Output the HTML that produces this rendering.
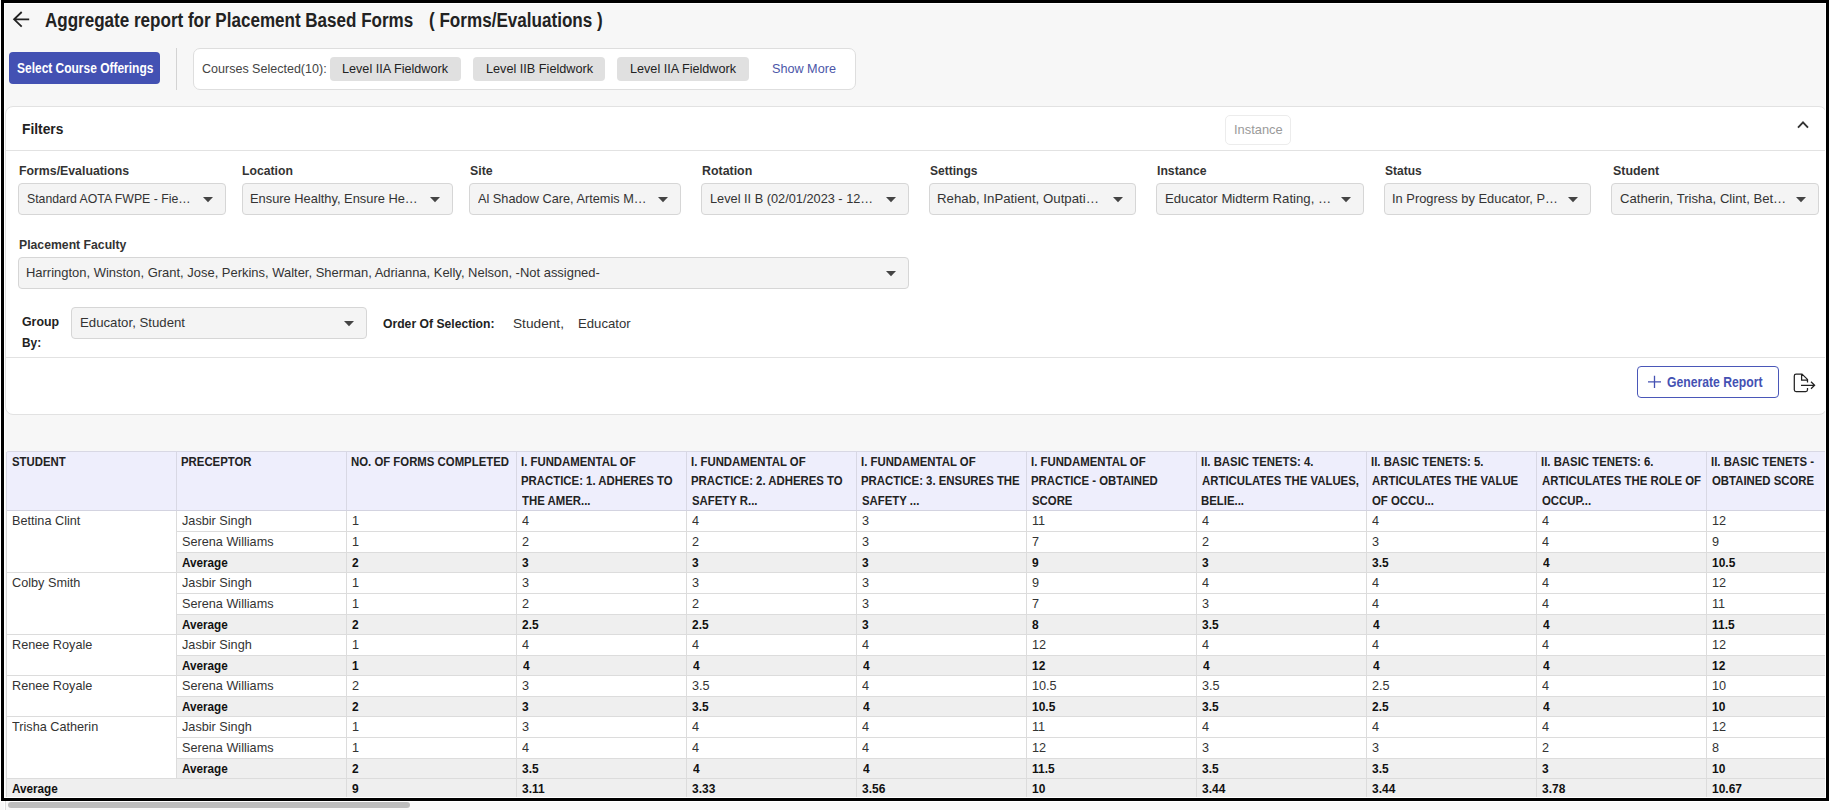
<!DOCTYPE html>
<html><head><meta charset="utf-8"><title>Aggregate report for Placement Based Forms</title>
<style>
html,body{margin:0;padding:0;width:1830px;height:810px;overflow:hidden;background:#f7f7f7;font-family:"Liberation Sans",sans-serif}
.t{position:absolute;white-space:nowrap;transform-origin:0 0}
</style></head><body>
<svg style="position:absolute;left:0;top:0" width="40" height="40"><path d="M14 19.3H29.2M21.7 12L14.1 19.3L21.7 26.6" fill="none" stroke="#222" stroke-width="1.8"/></svg>
<div style="position:absolute;left:9px;top:52px;width:151px;height:32px;background:#4351b3;border-radius:4px"></div>
<div style="position:absolute;left:176px;top:48px;width:1px;height:42px;background:#d3d3d3"></div>
<div style="position:absolute;left:193px;top:48px;width:661px;height:40px;background:#fff;border:1px solid #dedede;border-radius:7px"></div>
<div style="position:absolute;left:330px;top:57px;width:131px;height:24px;background:#e0e0e0;border-radius:4px"></div>
<div style="position:absolute;left:473px;top:57px;width:132px;height:24px;background:#e0e0e0;border-radius:4px"></div>
<div style="position:absolute;left:617px;top:57px;width:132px;height:24px;background:#e0e0e0;border-radius:4px"></div>
<div style="position:absolute;left:5px;top:106px;width:1822px;height:309px;box-sizing:border-box;background:#fff;border:1px solid #e2e2e2;border-radius:8px"></div>
<div style="position:absolute;left:6px;top:150px;width:1830px;height:1px;background:#e2e2e2"></div>
<div style="position:absolute;left:1225px;top:115px;width:64px;height:28px;border:1px solid #ececec;border-radius:5px"></div>
<svg style="position:absolute;left:1790px;top:115px" width="30" height="20"><path d="M8 12.6L13 7.4L18 12.6" fill="none" stroke="#333" stroke-width="1.9"/></svg>
<div style="position:absolute;left:18px;top:183px;width:208px;height:32px;box-sizing:border-box;background:#f4f4f4;border:1px solid #d6d6d6;border-radius:4px"></div>
<svg style="position:absolute;left:203.2px;top:196.6px" width="10" height="6"><path d="M0 0H10L5 5.3Z" fill="#444"/></svg>
<div style="position:absolute;left:242px;top:183px;width:211px;height:32px;box-sizing:border-box;background:#f4f4f4;border:1px solid #d6d6d6;border-radius:4px"></div>
<svg style="position:absolute;left:429.9px;top:196.6px" width="10" height="6"><path d="M0 0H10L5 5.3Z" fill="#444"/></svg>
<div style="position:absolute;left:469px;top:183px;width:212px;height:32px;box-sizing:border-box;background:#f4f4f4;border:1px solid #d6d6d6;border-radius:4px"></div>
<svg style="position:absolute;left:658.1px;top:196.6px" width="10" height="6"><path d="M0 0H10L5 5.3Z" fill="#444"/></svg>
<div style="position:absolute;left:701px;top:183px;width:208px;height:32px;box-sizing:border-box;background:#f4f4f4;border:1px solid #d6d6d6;border-radius:4px"></div>
<svg style="position:absolute;left:886.0px;top:196.6px" width="10" height="6"><path d="M0 0H10L5 5.3Z" fill="#444"/></svg>
<div style="position:absolute;left:929px;top:183px;width:207px;height:32px;box-sizing:border-box;background:#f4f4f4;border:1px solid #d6d6d6;border-radius:4px"></div>
<svg style="position:absolute;left:1112.8px;top:196.6px" width="10" height="6"><path d="M0 0H10L5 5.3Z" fill="#444"/></svg>
<div style="position:absolute;left:1156px;top:183px;width:208px;height:32px;box-sizing:border-box;background:#f4f4f4;border:1px solid #d6d6d6;border-radius:4px"></div>
<svg style="position:absolute;left:1341.0px;top:196.6px" width="10" height="6"><path d="M0 0H10L5 5.3Z" fill="#444"/></svg>
<div style="position:absolute;left:1384px;top:183px;width:207px;height:32px;box-sizing:border-box;background:#f4f4f4;border:1px solid #d6d6d6;border-radius:4px"></div>
<svg style="position:absolute;left:1567.8px;top:196.6px" width="10" height="6"><path d="M0 0H10L5 5.3Z" fill="#444"/></svg>
<div style="position:absolute;left:1611px;top:183px;width:208px;height:32px;box-sizing:border-box;background:#f4f4f4;border:1px solid #d6d6d6;border-radius:4px"></div>
<svg style="position:absolute;left:1796.0px;top:196.6px" width="10" height="6"><path d="M0 0H10L5 5.3Z" fill="#444"/></svg>
<div style="position:absolute;left:18px;top:257px;width:891px;height:32px;box-sizing:border-box;background:#f4f4f4;border:1px solid #d6d6d6;border-radius:4px"></div>
<svg style="position:absolute;left:886.0px;top:270.8px" width="10" height="6"><path d="M0 0H10L5 5.3Z" fill="#444"/></svg>
<div style="position:absolute;left:71px;top:307px;width:296px;height:32px;box-sizing:border-box;background:#f4f4f4;border:1px solid #d6d6d6;border-radius:4px"></div>
<svg style="position:absolute;left:344.2px;top:320.6px" width="10" height="6"><path d="M0 0H10L5 5.3Z" fill="#444"/></svg>
<div style="position:absolute;left:6px;top:357px;width:1830px;height:1px;background:#e2e2e2"></div>
<div style="position:absolute;left:1637.4px;top:366.1px;width:139.2px;height:29.5px;border:1px solid #4a57b8;border-radius:4px"></div>
<svg style="position:absolute;left:1640px;top:370px" width="30" height="24"><path d="M8 11.9H21M14.5 5.8V18" fill="none" stroke="#4451b3" stroke-width="1.3"/></svg>
<svg style="position:absolute;left:1790px;top:370px" width="30" height="26"><path d="M17.5 12.5V9.4L12 4.1H6.1Q4.3 4.1 4.3 5.9V19.8Q4.3 21.6 6.1 21.6H15.7Q17.5 21.6 17.5 19.8V18M11.6 4.3V10.1H17.5M11 15.3H24.5M21 11.8L24.6 15.3L21 18.8" fill="none" stroke="#222" stroke-width="1.25"/></svg>
<div style="position:absolute;left:6px;top:451px;width:1830px;height:60px;background:#eeeefc;border-top:1px solid #d8d8e4;border-radius:3px 0 0 0;box-sizing:border-box"></div>
<div style="position:absolute;left:6px;top:511px;width:1830px;height:300px;background:#fff"></div>
<div style="position:absolute;left:177px;top:552px;width:1699px;height:20px;background:#efefef"></div>
<div style="position:absolute;left:177px;top:614px;width:1699px;height:20px;background:#efefef"></div>
<div style="position:absolute;left:177px;top:655px;width:1699px;height:20px;background:#efefef"></div>
<div style="position:absolute;left:177px;top:696px;width:1699px;height:20px;background:#efefef"></div>
<div style="position:absolute;left:177px;top:758px;width:1699px;height:20px;background:#efefef"></div>
<div style="position:absolute;left:6px;top:778px;width:1870px;height:21px;background:#efefef"></div>
<div style="position:absolute;left:6px;top:510px;width:1830px;height:1px;background:#d3d3e0"></div>
<div style="position:absolute;left:176px;top:531px;width:1700px;height:1px;background:#dcdcdc"></div>
<div style="position:absolute;left:176px;top:552px;width:1700px;height:1px;background:#dcdcdc"></div>
<div style="position:absolute;left:6px;top:572px;width:1870px;height:1px;background:#dcdcdc"></div>
<div style="position:absolute;left:176px;top:593px;width:1700px;height:1px;background:#dcdcdc"></div>
<div style="position:absolute;left:176px;top:614px;width:1700px;height:1px;background:#dcdcdc"></div>
<div style="position:absolute;left:6px;top:634px;width:1870px;height:1px;background:#dcdcdc"></div>
<div style="position:absolute;left:176px;top:655px;width:1700px;height:1px;background:#dcdcdc"></div>
<div style="position:absolute;left:6px;top:675px;width:1870px;height:1px;background:#dcdcdc"></div>
<div style="position:absolute;left:176px;top:696px;width:1700px;height:1px;background:#dcdcdc"></div>
<div style="position:absolute;left:6px;top:716px;width:1870px;height:1px;background:#dcdcdc"></div>
<div style="position:absolute;left:176px;top:737px;width:1700px;height:1px;background:#dcdcdc"></div>
<div style="position:absolute;left:176px;top:758px;width:1700px;height:1px;background:#dcdcdc"></div>
<div style="position:absolute;left:6px;top:778px;width:1870px;height:1px;background:#dcdcdc"></div>
<div style="position:absolute;left:6px;top:799px;width:1870px;height:1px;background:#dcdcdc"></div>
<div style="position:absolute;left:6px;top:452px;width:1px;height:58px;background:#d8d8e4"></div>
<div style="position:absolute;left:6px;top:510px;width:1px;height:300px;background:#d9d9d9"></div>
<div style="position:absolute;left:176px;top:452px;width:1px;height:58px;background:#d8d8e4"></div>
<div style="position:absolute;left:176px;top:511px;width:1px;height:267px;background:#dcdcdc"></div>
<div style="position:absolute;left:346px;top:452px;width:1px;height:58px;background:#d8d8e4"></div>
<div style="position:absolute;left:346px;top:511px;width:1px;height:299px;background:#dcdcdc"></div>
<div style="position:absolute;left:516px;top:452px;width:1px;height:58px;background:#d8d8e4"></div>
<div style="position:absolute;left:516px;top:511px;width:1px;height:299px;background:#dcdcdc"></div>
<div style="position:absolute;left:686px;top:452px;width:1px;height:58px;background:#d8d8e4"></div>
<div style="position:absolute;left:686px;top:511px;width:1px;height:299px;background:#dcdcdc"></div>
<div style="position:absolute;left:856px;top:452px;width:1px;height:58px;background:#d8d8e4"></div>
<div style="position:absolute;left:856px;top:511px;width:1px;height:299px;background:#dcdcdc"></div>
<div style="position:absolute;left:1026px;top:452px;width:1px;height:58px;background:#d8d8e4"></div>
<div style="position:absolute;left:1026px;top:511px;width:1px;height:299px;background:#dcdcdc"></div>
<div style="position:absolute;left:1196px;top:452px;width:1px;height:58px;background:#d8d8e4"></div>
<div style="position:absolute;left:1196px;top:511px;width:1px;height:299px;background:#dcdcdc"></div>
<div style="position:absolute;left:1366px;top:452px;width:1px;height:58px;background:#d8d8e4"></div>
<div style="position:absolute;left:1366px;top:511px;width:1px;height:299px;background:#dcdcdc"></div>
<div style="position:absolute;left:1536px;top:452px;width:1px;height:58px;background:#d8d8e4"></div>
<div style="position:absolute;left:1536px;top:511px;width:1px;height:299px;background:#dcdcdc"></div>
<div style="position:absolute;left:1706px;top:452px;width:1px;height:58px;background:#d8d8e4"></div>
<div style="position:absolute;left:1706px;top:511px;width:1px;height:299px;background:#dcdcdc"></div>
<span class="t" style="left:44.73px;top:10.79px;font-size:19.5px;line-height:19.5px;font-weight:700;color:#222;transform:scaleX(0.8736);">Aggregate report for Placement Based Forms</span>
<span class="t" style="left:429.20px;top:10.79px;font-size:19.5px;line-height:19.5px;font-weight:700;color:#222;transform:scaleX(0.8761);">( Forms/Evaluations )</span>
<span class="t" style="left:16.81px;top:61.33px;font-size:14.5px;line-height:14.5px;font-weight:700;color:#fff;transform:scaleX(0.8256);">Select Course Offerings</span>
<span class="t" style="left:202.41px;top:61.57px;font-size:13.5px;line-height:13.5px;font-weight:400;color:#444;transform:scaleX(0.9278);">Courses Selected(10):</span>
<span class="t" style="left:342.01px;top:61.57px;font-size:13.5px;line-height:13.5px;font-weight:400;color:#222;transform:scaleX(0.9355);">Level IIA Fieldwork</span>
<span class="t" style="left:486.01px;top:61.57px;font-size:13.5px;line-height:13.5px;font-weight:400;color:#222;transform:scaleX(0.9390);">Level IIB Fieldwork</span>
<span class="t" style="left:629.81px;top:61.57px;font-size:13.5px;line-height:13.5px;font-weight:400;color:#222;transform:scaleX(0.9355);">Level IIA Fieldwork</span>
<span class="t" style="left:771.61px;top:61.57px;font-size:13.5px;line-height:13.5px;font-weight:400;color:#4b56a8;transform:scaleX(0.9360);">Show More</span>
<span class="t" style="left:21.74px;top:121.18px;font-size:15.5px;line-height:15.5px;font-weight:700;color:#222;transform:scaleX(0.8905);">Filters</span>
<span class="t" style="left:1233.79px;top:122.67px;font-size:13.5px;line-height:13.5px;font-weight:400;color:#9a9a9a;transform:scaleX(0.9548);">Instance</span>
<span class="t" style="left:18.63px;top:163.87px;font-size:13.5px;line-height:13.5px;font-weight:700;color:#333;transform:scaleX(0.9121);">Forms/Evaluations</span>
<span class="t" style="left:242.24px;top:163.87px;font-size:13.5px;line-height:13.5px;font-weight:700;color:#333;transform:scaleX(0.9041);">Location</span>
<span class="t" style="left:470.31px;top:163.87px;font-size:13.5px;line-height:13.5px;font-weight:700;color:#333;transform:scaleX(0.9128);">Site</span>
<span class="t" style="left:701.63px;top:163.87px;font-size:13.5px;line-height:13.5px;font-weight:700;color:#333;transform:scaleX(0.9184);">Rotation</span>
<span class="t" style="left:929.51px;top:163.87px;font-size:13.5px;line-height:13.5px;font-weight:700;color:#333;transform:scaleX(0.8915);">Settings</span>
<span class="t" style="left:1156.94px;top:163.87px;font-size:13.5px;line-height:13.5px;font-weight:700;color:#333;transform:scaleX(0.9050);">Instance</span>
<span class="t" style="left:1384.81px;top:163.87px;font-size:13.5px;line-height:13.5px;font-weight:700;color:#333;transform:scaleX(0.8889);">Status</span>
<span class="t" style="left:1612.81px;top:163.87px;font-size:13.5px;line-height:13.5px;font-weight:700;color:#333;transform:scaleX(0.9186);">Student</span>
<span class="t" style="left:27.32px;top:191.57px;font-size:13.5px;line-height:13.5px;font-weight:400;color:#333;transform:scaleX(0.9097);">Standard AOTA FWPE - Fie…</span>
<span class="t" style="left:250.30px;top:191.57px;font-size:13.5px;line-height:13.5px;font-weight:400;color:#333;transform:scaleX(0.9525);">Ensure Healthy, Ensure He…</span>
<span class="t" style="left:478.40px;top:191.57px;font-size:13.5px;line-height:13.5px;font-weight:400;color:#333;transform:scaleX(0.9436);">Al Shadow Care, Artemis M…</span>
<span class="t" style="left:709.50px;top:191.57px;font-size:13.5px;line-height:13.5px;font-weight:400;color:#333;transform:scaleX(0.9449);">Level II B (02/01/2023 - 12…</span>
<span class="t" style="left:937.17px;top:191.57px;font-size:13.5px;line-height:13.5px;font-weight:400;color:#333;transform:scaleX(0.9806);">Rehab, InPatient, Outpati…</span>
<span class="t" style="left:1164.97px;top:191.57px;font-size:13.5px;line-height:13.5px;font-weight:400;color:#333;transform:scaleX(0.9757);">Educator Midterm Rating, …</span>
<span class="t" style="left:1392.19px;top:191.57px;font-size:13.5px;line-height:13.5px;font-weight:400;color:#333;transform:scaleX(0.9531);">In Progress by Educator, P…</span>
<span class="t" style="left:1620.19px;top:191.57px;font-size:13.5px;line-height:13.5px;font-weight:400;color:#333;transform:scaleX(0.9717);">Catherin, Trisha, Clint, Bet…</span>
<span class="t" style="left:18.84px;top:237.77px;font-size:13.5px;line-height:13.5px;font-weight:700;color:#333;transform:scaleX(0.9059);">Placement Faculty</span>
<span class="t" style="left:26.49px;top:265.77px;font-size:13.5px;line-height:13.5px;font-weight:400;color:#333;transform:scaleX(0.9596);">Harrington, Winston, Grant, Jose, Perkins, Walter, Sherman, Adrianna, Kelly, Nelson, -Not assigned-</span>
<span class="t" style="left:21.61px;top:315.47px;font-size:13.5px;line-height:13.5px;font-weight:700;color:#222;transform:scaleX(0.9160);">Group</span>
<span class="t" style="left:21.76px;top:335.77px;font-size:13.5px;line-height:13.5px;font-weight:700;color:#222;transform:scaleX(0.8793);">By:</span>
<span class="t" style="left:79.97px;top:315.57px;font-size:13.5px;line-height:13.5px;font-weight:400;color:#333;transform:scaleX(0.9782);">Educator, Student</span>
<span class="t" style="left:382.82px;top:317.47px;font-size:13.5px;line-height:13.5px;font-weight:700;color:#222;transform:scaleX(0.9007);">Order Of Selection:</span>
<span class="t" style="left:512.57px;top:317.47px;font-size:13.5px;line-height:13.5px;font-weight:400;color:#333;transform:scaleX(1.0131);">Student,</span>
<span class="t" style="left:578.47px;top:317.47px;font-size:13.5px;line-height:13.5px;font-weight:400;color:#333;transform:scaleX(0.9733);">Educator</span>
<span class="t" style="left:1666.82px;top:375.35px;font-size:14px;line-height:14px;font-weight:700;color:#4451b3;transform:scaleX(0.8700);">Generate Report</span>
<span class="t" style="left:12.02px;top:455.00px;font-size:13px;line-height:13px;font-weight:700;color:#222;transform:scaleX(0.8750);">STUDENT</span>
<span class="t" style="left:181.49px;top:455.00px;font-size:13px;line-height:13px;font-weight:700;color:#222;transform:scaleX(0.8750);">PRECEPTOR</span>
<span class="t" style="left:351.49px;top:455.00px;font-size:13px;line-height:13px;font-weight:700;color:#222;transform:scaleX(0.8750);">NO. OF FORMS COMPLETED</span>
<span class="t" style="left:521.49px;top:455.00px;font-size:13px;line-height:13px;font-weight:700;color:#222;transform:scaleX(0.8750);">I. FUNDAMENTAL OF</span>
<span class="t" style="left:521.49px;top:474.20px;font-size:13px;line-height:13px;font-weight:700;color:#222;transform:scaleX(0.8750);">PRACTICE: 1. ADHERES TO</span>
<span class="t" style="left:522.20px;top:494.00px;font-size:13px;line-height:13px;font-weight:700;color:#222;transform:scaleX(0.8750);">THE AMER...</span>
<span class="t" style="left:691.49px;top:455.00px;font-size:13px;line-height:13px;font-weight:700;color:#222;transform:scaleX(0.8750);">I. FUNDAMENTAL OF</span>
<span class="t" style="left:691.49px;top:474.20px;font-size:13px;line-height:13px;font-weight:700;color:#222;transform:scaleX(0.8750);">PRACTICE: 2. ADHERES TO</span>
<span class="t" style="left:692.02px;top:494.00px;font-size:13px;line-height:13px;font-weight:700;color:#222;transform:scaleX(0.8750);">SAFETY R...</span>
<span class="t" style="left:861.49px;top:455.00px;font-size:13px;line-height:13px;font-weight:700;color:#222;transform:scaleX(0.8750);">I. FUNDAMENTAL OF</span>
<span class="t" style="left:861.49px;top:474.20px;font-size:13px;line-height:13px;font-weight:700;color:#222;transform:scaleX(0.8750);">PRACTICE: 3. ENSURES THE</span>
<span class="t" style="left:862.02px;top:494.00px;font-size:13px;line-height:13px;font-weight:700;color:#222;transform:scaleX(0.8750);">SAFETY ...</span>
<span class="t" style="left:1031.49px;top:455.00px;font-size:13px;line-height:13px;font-weight:700;color:#222;transform:scaleX(0.8750);">I. FUNDAMENTAL OF</span>
<span class="t" style="left:1031.49px;top:474.20px;font-size:13px;line-height:13px;font-weight:700;color:#222;transform:scaleX(0.8750);">PRACTICE - OBTAINED</span>
<span class="t" style="left:1032.02px;top:494.00px;font-size:13px;line-height:13px;font-weight:700;color:#222;transform:scaleX(0.8750);">SCORE</span>
<span class="t" style="left:1201.49px;top:455.00px;font-size:13px;line-height:13px;font-weight:700;color:#222;transform:scaleX(0.8750);">II. BASIC TENETS: 4.</span>
<span class="t" style="left:1202.02px;top:474.20px;font-size:13px;line-height:13px;font-weight:700;color:#222;transform:scaleX(0.8750);">ARTICULATES THE VALUES,</span>
<span class="t" style="left:1201.49px;top:494.00px;font-size:13px;line-height:13px;font-weight:700;color:#222;transform:scaleX(0.8750);">BELIE...</span>
<span class="t" style="left:1371.49px;top:455.00px;font-size:13px;line-height:13px;font-weight:700;color:#222;transform:scaleX(0.8750);">II. BASIC TENETS: 5.</span>
<span class="t" style="left:1372.02px;top:474.20px;font-size:13px;line-height:13px;font-weight:700;color:#222;transform:scaleX(0.8750);">ARTICULATES THE VALUE</span>
<span class="t" style="left:1371.84px;top:494.00px;font-size:13px;line-height:13px;font-weight:700;color:#222;transform:scaleX(0.8750);">OF OCCU...</span>
<span class="t" style="left:1541.49px;top:455.00px;font-size:13px;line-height:13px;font-weight:700;color:#222;transform:scaleX(0.8750);">II. BASIC TENETS: 6.</span>
<span class="t" style="left:1542.02px;top:474.20px;font-size:13px;line-height:13px;font-weight:700;color:#222;transform:scaleX(0.8750);">ARTICULATES THE ROLE OF</span>
<span class="t" style="left:1541.84px;top:494.00px;font-size:13px;line-height:13px;font-weight:700;color:#222;transform:scaleX(0.8750);">OCCUP...</span>
<span class="t" style="left:1711.49px;top:455.00px;font-size:13px;line-height:13px;font-weight:700;color:#222;transform:scaleX(0.8750);">II. BASIC TENETS -</span>
<span class="t" style="left:1711.84px;top:474.20px;font-size:13px;line-height:13px;font-weight:700;color:#222;transform:scaleX(0.8750);">OBTAINED SCORE</span>
<span class="t" style="left:11.51px;top:513.60px;font-size:13px;line-height:13px;font-weight:400;color:#333;transform:scaleX(0.9750);">Bettina Clint</span>
<span class="t" style="left:182.30px;top:513.60px;font-size:13px;line-height:13px;font-weight:400;color:#333;transform:scaleX(0.9750);">Jasbir Singh</span>
<span class="t" style="left:351.71px;top:513.60px;font-size:13px;line-height:13px;font-weight:400;color:#333;transform:scaleX(0.9750);">1</span>
<span class="t" style="left:522.30px;top:513.60px;font-size:13px;line-height:13px;font-weight:400;color:#333;transform:scaleX(0.9750);">4</span>
<span class="t" style="left:692.30px;top:513.60px;font-size:13px;line-height:13px;font-weight:400;color:#333;transform:scaleX(0.9750);">4</span>
<span class="t" style="left:862.10px;top:513.60px;font-size:13px;line-height:13px;font-weight:400;color:#333;transform:scaleX(0.9750);">3</span>
<span class="t" style="left:1031.71px;top:513.60px;font-size:13px;line-height:13px;font-weight:400;color:#333;transform:scaleX(0.9750);">11</span>
<span class="t" style="left:1202.30px;top:513.60px;font-size:13px;line-height:13px;font-weight:400;color:#333;transform:scaleX(0.9750);">4</span>
<span class="t" style="left:1372.30px;top:513.60px;font-size:13px;line-height:13px;font-weight:400;color:#333;transform:scaleX(0.9750);">4</span>
<span class="t" style="left:1542.30px;top:513.60px;font-size:13px;line-height:13px;font-weight:400;color:#333;transform:scaleX(0.9750);">4</span>
<span class="t" style="left:1711.71px;top:513.60px;font-size:13px;line-height:13px;font-weight:400;color:#333;transform:scaleX(0.9750);">12</span>
<span class="t" style="left:182.10px;top:534.60px;font-size:13px;line-height:13px;font-weight:400;color:#333;transform:scaleX(0.9750);">Serena Williams</span>
<span class="t" style="left:351.71px;top:534.60px;font-size:13px;line-height:13px;font-weight:400;color:#333;transform:scaleX(0.9750);">1</span>
<span class="t" style="left:521.91px;top:534.60px;font-size:13px;line-height:13px;font-weight:400;color:#333;transform:scaleX(0.9750);">2</span>
<span class="t" style="left:691.91px;top:534.60px;font-size:13px;line-height:13px;font-weight:400;color:#333;transform:scaleX(0.9750);">2</span>
<span class="t" style="left:862.10px;top:534.60px;font-size:13px;line-height:13px;font-weight:400;color:#333;transform:scaleX(0.9750);">3</span>
<span class="t" style="left:1031.91px;top:534.60px;font-size:13px;line-height:13px;font-weight:400;color:#333;transform:scaleX(0.9750);">7</span>
<span class="t" style="left:1201.91px;top:534.60px;font-size:13px;line-height:13px;font-weight:400;color:#333;transform:scaleX(0.9750);">2</span>
<span class="t" style="left:1372.10px;top:534.60px;font-size:13px;line-height:13px;font-weight:400;color:#333;transform:scaleX(0.9750);">3</span>
<span class="t" style="left:1542.30px;top:534.60px;font-size:13px;line-height:13px;font-weight:400;color:#333;transform:scaleX(0.9750);">4</span>
<span class="t" style="left:1711.91px;top:534.60px;font-size:13px;line-height:13px;font-weight:400;color:#333;transform:scaleX(0.9750);">9</span>
<span class="t" style="left:182.32px;top:555.60px;font-size:13px;line-height:13px;font-weight:700;color:#111;transform:scaleX(0.9000);">Average</span>
<span class="t" style="left:352.13px;top:555.60px;font-size:13px;line-height:13px;font-weight:700;color:#111;transform:scaleX(0.9200);">2</span>
<span class="t" style="left:522.31px;top:555.60px;font-size:13px;line-height:13px;font-weight:700;color:#111;transform:scaleX(0.9200);">3</span>
<span class="t" style="left:692.31px;top:555.60px;font-size:13px;line-height:13px;font-weight:700;color:#111;transform:scaleX(0.9200);">3</span>
<span class="t" style="left:862.31px;top:555.60px;font-size:13px;line-height:13px;font-weight:700;color:#111;transform:scaleX(0.9200);">3</span>
<span class="t" style="left:1032.13px;top:555.60px;font-size:13px;line-height:13px;font-weight:700;color:#111;transform:scaleX(0.9200);">9</span>
<span class="t" style="left:1202.31px;top:555.60px;font-size:13px;line-height:13px;font-weight:700;color:#111;transform:scaleX(0.9200);">3</span>
<span class="t" style="left:1372.31px;top:555.60px;font-size:13px;line-height:13px;font-weight:700;color:#111;transform:scaleX(0.9200);">3.5</span>
<span class="t" style="left:1542.50px;top:555.60px;font-size:13px;line-height:13px;font-weight:700;color:#111;transform:scaleX(0.9200);">4</span>
<span class="t" style="left:1711.75px;top:555.60px;font-size:13px;line-height:13px;font-weight:700;color:#111;transform:scaleX(0.9200);">10.5</span>
<span class="t" style="left:11.91px;top:575.60px;font-size:13px;line-height:13px;font-weight:400;color:#333;transform:scaleX(0.9750);">Colby Smith</span>
<span class="t" style="left:182.30px;top:575.60px;font-size:13px;line-height:13px;font-weight:400;color:#333;transform:scaleX(0.9750);">Jasbir Singh</span>
<span class="t" style="left:351.71px;top:575.60px;font-size:13px;line-height:13px;font-weight:400;color:#333;transform:scaleX(0.9750);">1</span>
<span class="t" style="left:522.10px;top:575.60px;font-size:13px;line-height:13px;font-weight:400;color:#333;transform:scaleX(0.9750);">3</span>
<span class="t" style="left:692.10px;top:575.60px;font-size:13px;line-height:13px;font-weight:400;color:#333;transform:scaleX(0.9750);">3</span>
<span class="t" style="left:862.10px;top:575.60px;font-size:13px;line-height:13px;font-weight:400;color:#333;transform:scaleX(0.9750);">3</span>
<span class="t" style="left:1031.91px;top:575.60px;font-size:13px;line-height:13px;font-weight:400;color:#333;transform:scaleX(0.9750);">9</span>
<span class="t" style="left:1202.30px;top:575.60px;font-size:13px;line-height:13px;font-weight:400;color:#333;transform:scaleX(0.9750);">4</span>
<span class="t" style="left:1372.30px;top:575.60px;font-size:13px;line-height:13px;font-weight:400;color:#333;transform:scaleX(0.9750);">4</span>
<span class="t" style="left:1542.30px;top:575.60px;font-size:13px;line-height:13px;font-weight:400;color:#333;transform:scaleX(0.9750);">4</span>
<span class="t" style="left:1711.71px;top:575.60px;font-size:13px;line-height:13px;font-weight:400;color:#333;transform:scaleX(0.9750);">12</span>
<span class="t" style="left:182.10px;top:596.60px;font-size:13px;line-height:13px;font-weight:400;color:#333;transform:scaleX(0.9750);">Serena Williams</span>
<span class="t" style="left:351.71px;top:596.60px;font-size:13px;line-height:13px;font-weight:400;color:#333;transform:scaleX(0.9750);">1</span>
<span class="t" style="left:521.91px;top:596.60px;font-size:13px;line-height:13px;font-weight:400;color:#333;transform:scaleX(0.9750);">2</span>
<span class="t" style="left:691.91px;top:596.60px;font-size:13px;line-height:13px;font-weight:400;color:#333;transform:scaleX(0.9750);">2</span>
<span class="t" style="left:862.10px;top:596.60px;font-size:13px;line-height:13px;font-weight:400;color:#333;transform:scaleX(0.9750);">3</span>
<span class="t" style="left:1031.91px;top:596.60px;font-size:13px;line-height:13px;font-weight:400;color:#333;transform:scaleX(0.9750);">7</span>
<span class="t" style="left:1202.10px;top:596.60px;font-size:13px;line-height:13px;font-weight:400;color:#333;transform:scaleX(0.9750);">3</span>
<span class="t" style="left:1372.30px;top:596.60px;font-size:13px;line-height:13px;font-weight:400;color:#333;transform:scaleX(0.9750);">4</span>
<span class="t" style="left:1542.30px;top:596.60px;font-size:13px;line-height:13px;font-weight:400;color:#333;transform:scaleX(0.9750);">4</span>
<span class="t" style="left:1711.71px;top:596.60px;font-size:13px;line-height:13px;font-weight:400;color:#333;transform:scaleX(0.9750);">11</span>
<span class="t" style="left:182.32px;top:617.60px;font-size:13px;line-height:13px;font-weight:700;color:#111;transform:scaleX(0.9000);">Average</span>
<span class="t" style="left:352.13px;top:617.60px;font-size:13px;line-height:13px;font-weight:700;color:#111;transform:scaleX(0.9200);">2</span>
<span class="t" style="left:522.13px;top:617.60px;font-size:13px;line-height:13px;font-weight:700;color:#111;transform:scaleX(0.9200);">2.5</span>
<span class="t" style="left:692.13px;top:617.60px;font-size:13px;line-height:13px;font-weight:700;color:#111;transform:scaleX(0.9200);">2.5</span>
<span class="t" style="left:862.31px;top:617.60px;font-size:13px;line-height:13px;font-weight:700;color:#111;transform:scaleX(0.9200);">3</span>
<span class="t" style="left:1032.13px;top:617.60px;font-size:13px;line-height:13px;font-weight:700;color:#111;transform:scaleX(0.9200);">8</span>
<span class="t" style="left:1202.31px;top:617.60px;font-size:13px;line-height:13px;font-weight:700;color:#111;transform:scaleX(0.9200);">3.5</span>
<span class="t" style="left:1372.50px;top:617.60px;font-size:13px;line-height:13px;font-weight:700;color:#111;transform:scaleX(0.9200);">4</span>
<span class="t" style="left:1542.50px;top:617.60px;font-size:13px;line-height:13px;font-weight:700;color:#111;transform:scaleX(0.9200);">4</span>
<span class="t" style="left:1711.75px;top:617.60px;font-size:13px;line-height:13px;font-weight:700;color:#111;transform:scaleX(0.9200);">11.5</span>
<span class="t" style="left:11.51px;top:637.60px;font-size:13px;line-height:13px;font-weight:400;color:#333;transform:scaleX(0.9750);">Renee Royale</span>
<span class="t" style="left:182.30px;top:637.60px;font-size:13px;line-height:13px;font-weight:400;color:#333;transform:scaleX(0.9750);">Jasbir Singh</span>
<span class="t" style="left:351.71px;top:637.60px;font-size:13px;line-height:13px;font-weight:400;color:#333;transform:scaleX(0.9750);">1</span>
<span class="t" style="left:522.30px;top:637.60px;font-size:13px;line-height:13px;font-weight:400;color:#333;transform:scaleX(0.9750);">4</span>
<span class="t" style="left:692.30px;top:637.60px;font-size:13px;line-height:13px;font-weight:400;color:#333;transform:scaleX(0.9750);">4</span>
<span class="t" style="left:862.30px;top:637.60px;font-size:13px;line-height:13px;font-weight:400;color:#333;transform:scaleX(0.9750);">4</span>
<span class="t" style="left:1031.71px;top:637.60px;font-size:13px;line-height:13px;font-weight:400;color:#333;transform:scaleX(0.9750);">12</span>
<span class="t" style="left:1202.30px;top:637.60px;font-size:13px;line-height:13px;font-weight:400;color:#333;transform:scaleX(0.9750);">4</span>
<span class="t" style="left:1372.30px;top:637.60px;font-size:13px;line-height:13px;font-weight:400;color:#333;transform:scaleX(0.9750);">4</span>
<span class="t" style="left:1542.30px;top:637.60px;font-size:13px;line-height:13px;font-weight:400;color:#333;transform:scaleX(0.9750);">4</span>
<span class="t" style="left:1711.71px;top:637.60px;font-size:13px;line-height:13px;font-weight:400;color:#333;transform:scaleX(0.9750);">12</span>
<span class="t" style="left:182.32px;top:658.60px;font-size:13px;line-height:13px;font-weight:700;color:#111;transform:scaleX(0.9000);">Average</span>
<span class="t" style="left:351.75px;top:658.60px;font-size:13px;line-height:13px;font-weight:700;color:#111;transform:scaleX(0.9200);">1</span>
<span class="t" style="left:522.50px;top:658.60px;font-size:13px;line-height:13px;font-weight:700;color:#111;transform:scaleX(0.9200);">4</span>
<span class="t" style="left:692.50px;top:658.60px;font-size:13px;line-height:13px;font-weight:700;color:#111;transform:scaleX(0.9200);">4</span>
<span class="t" style="left:862.50px;top:658.60px;font-size:13px;line-height:13px;font-weight:700;color:#111;transform:scaleX(0.9200);">4</span>
<span class="t" style="left:1031.75px;top:658.60px;font-size:13px;line-height:13px;font-weight:700;color:#111;transform:scaleX(0.9200);">12</span>
<span class="t" style="left:1202.50px;top:658.60px;font-size:13px;line-height:13px;font-weight:700;color:#111;transform:scaleX(0.9200);">4</span>
<span class="t" style="left:1372.50px;top:658.60px;font-size:13px;line-height:13px;font-weight:700;color:#111;transform:scaleX(0.9200);">4</span>
<span class="t" style="left:1542.50px;top:658.60px;font-size:13px;line-height:13px;font-weight:700;color:#111;transform:scaleX(0.9200);">4</span>
<span class="t" style="left:1711.75px;top:658.60px;font-size:13px;line-height:13px;font-weight:700;color:#111;transform:scaleX(0.9200);">12</span>
<span class="t" style="left:11.51px;top:678.60px;font-size:13px;line-height:13px;font-weight:400;color:#333;transform:scaleX(0.9750);">Renee Royale</span>
<span class="t" style="left:182.10px;top:678.60px;font-size:13px;line-height:13px;font-weight:400;color:#333;transform:scaleX(0.9750);">Serena Williams</span>
<span class="t" style="left:351.91px;top:678.60px;font-size:13px;line-height:13px;font-weight:400;color:#333;transform:scaleX(0.9750);">2</span>
<span class="t" style="left:522.10px;top:678.60px;font-size:13px;line-height:13px;font-weight:400;color:#333;transform:scaleX(0.9750);">3</span>
<span class="t" style="left:692.10px;top:678.60px;font-size:13px;line-height:13px;font-weight:400;color:#333;transform:scaleX(0.9750);">3.5</span>
<span class="t" style="left:862.30px;top:678.60px;font-size:13px;line-height:13px;font-weight:400;color:#333;transform:scaleX(0.9750);">4</span>
<span class="t" style="left:1031.71px;top:678.60px;font-size:13px;line-height:13px;font-weight:400;color:#333;transform:scaleX(0.9750);">10.5</span>
<span class="t" style="left:1202.10px;top:678.60px;font-size:13px;line-height:13px;font-weight:400;color:#333;transform:scaleX(0.9750);">3.5</span>
<span class="t" style="left:1371.91px;top:678.60px;font-size:13px;line-height:13px;font-weight:400;color:#333;transform:scaleX(0.9750);">2.5</span>
<span class="t" style="left:1542.30px;top:678.60px;font-size:13px;line-height:13px;font-weight:400;color:#333;transform:scaleX(0.9750);">4</span>
<span class="t" style="left:1711.71px;top:678.60px;font-size:13px;line-height:13px;font-weight:400;color:#333;transform:scaleX(0.9750);">10</span>
<span class="t" style="left:182.32px;top:699.60px;font-size:13px;line-height:13px;font-weight:700;color:#111;transform:scaleX(0.9000);">Average</span>
<span class="t" style="left:352.13px;top:699.60px;font-size:13px;line-height:13px;font-weight:700;color:#111;transform:scaleX(0.9200);">2</span>
<span class="t" style="left:522.31px;top:699.60px;font-size:13px;line-height:13px;font-weight:700;color:#111;transform:scaleX(0.9200);">3</span>
<span class="t" style="left:692.31px;top:699.60px;font-size:13px;line-height:13px;font-weight:700;color:#111;transform:scaleX(0.9200);">3.5</span>
<span class="t" style="left:862.50px;top:699.60px;font-size:13px;line-height:13px;font-weight:700;color:#111;transform:scaleX(0.9200);">4</span>
<span class="t" style="left:1031.75px;top:699.60px;font-size:13px;line-height:13px;font-weight:700;color:#111;transform:scaleX(0.9200);">10.5</span>
<span class="t" style="left:1202.31px;top:699.60px;font-size:13px;line-height:13px;font-weight:700;color:#111;transform:scaleX(0.9200);">3.5</span>
<span class="t" style="left:1372.13px;top:699.60px;font-size:13px;line-height:13px;font-weight:700;color:#111;transform:scaleX(0.9200);">2.5</span>
<span class="t" style="left:1542.50px;top:699.60px;font-size:13px;line-height:13px;font-weight:700;color:#111;transform:scaleX(0.9200);">4</span>
<span class="t" style="left:1711.75px;top:699.60px;font-size:13px;line-height:13px;font-weight:700;color:#111;transform:scaleX(0.9200);">10</span>
<span class="t" style="left:12.30px;top:719.60px;font-size:13px;line-height:13px;font-weight:400;color:#333;transform:scaleX(0.9750);">Trisha Catherin</span>
<span class="t" style="left:182.30px;top:719.60px;font-size:13px;line-height:13px;font-weight:400;color:#333;transform:scaleX(0.9750);">Jasbir Singh</span>
<span class="t" style="left:351.71px;top:719.60px;font-size:13px;line-height:13px;font-weight:400;color:#333;transform:scaleX(0.9750);">1</span>
<span class="t" style="left:522.10px;top:719.60px;font-size:13px;line-height:13px;font-weight:400;color:#333;transform:scaleX(0.9750);">3</span>
<span class="t" style="left:692.30px;top:719.60px;font-size:13px;line-height:13px;font-weight:400;color:#333;transform:scaleX(0.9750);">4</span>
<span class="t" style="left:862.30px;top:719.60px;font-size:13px;line-height:13px;font-weight:400;color:#333;transform:scaleX(0.9750);">4</span>
<span class="t" style="left:1031.71px;top:719.60px;font-size:13px;line-height:13px;font-weight:400;color:#333;transform:scaleX(0.9750);">11</span>
<span class="t" style="left:1202.30px;top:719.60px;font-size:13px;line-height:13px;font-weight:400;color:#333;transform:scaleX(0.9750);">4</span>
<span class="t" style="left:1372.30px;top:719.60px;font-size:13px;line-height:13px;font-weight:400;color:#333;transform:scaleX(0.9750);">4</span>
<span class="t" style="left:1542.30px;top:719.60px;font-size:13px;line-height:13px;font-weight:400;color:#333;transform:scaleX(0.9750);">4</span>
<span class="t" style="left:1711.71px;top:719.60px;font-size:13px;line-height:13px;font-weight:400;color:#333;transform:scaleX(0.9750);">12</span>
<span class="t" style="left:182.10px;top:740.60px;font-size:13px;line-height:13px;font-weight:400;color:#333;transform:scaleX(0.9750);">Serena Williams</span>
<span class="t" style="left:351.71px;top:740.60px;font-size:13px;line-height:13px;font-weight:400;color:#333;transform:scaleX(0.9750);">1</span>
<span class="t" style="left:522.30px;top:740.60px;font-size:13px;line-height:13px;font-weight:400;color:#333;transform:scaleX(0.9750);">4</span>
<span class="t" style="left:692.30px;top:740.60px;font-size:13px;line-height:13px;font-weight:400;color:#333;transform:scaleX(0.9750);">4</span>
<span class="t" style="left:862.30px;top:740.60px;font-size:13px;line-height:13px;font-weight:400;color:#333;transform:scaleX(0.9750);">4</span>
<span class="t" style="left:1031.71px;top:740.60px;font-size:13px;line-height:13px;font-weight:400;color:#333;transform:scaleX(0.9750);">12</span>
<span class="t" style="left:1202.10px;top:740.60px;font-size:13px;line-height:13px;font-weight:400;color:#333;transform:scaleX(0.9750);">3</span>
<span class="t" style="left:1372.10px;top:740.60px;font-size:13px;line-height:13px;font-weight:400;color:#333;transform:scaleX(0.9750);">3</span>
<span class="t" style="left:1541.91px;top:740.60px;font-size:13px;line-height:13px;font-weight:400;color:#333;transform:scaleX(0.9750);">2</span>
<span class="t" style="left:1712.10px;top:740.60px;font-size:13px;line-height:13px;font-weight:400;color:#333;transform:scaleX(0.9750);">8</span>
<span class="t" style="left:182.32px;top:761.60px;font-size:13px;line-height:13px;font-weight:700;color:#111;transform:scaleX(0.9000);">Average</span>
<span class="t" style="left:352.13px;top:761.60px;font-size:13px;line-height:13px;font-weight:700;color:#111;transform:scaleX(0.9200);">2</span>
<span class="t" style="left:522.31px;top:761.60px;font-size:13px;line-height:13px;font-weight:700;color:#111;transform:scaleX(0.9200);">3.5</span>
<span class="t" style="left:692.50px;top:761.60px;font-size:13px;line-height:13px;font-weight:700;color:#111;transform:scaleX(0.9200);">4</span>
<span class="t" style="left:862.50px;top:761.60px;font-size:13px;line-height:13px;font-weight:700;color:#111;transform:scaleX(0.9200);">4</span>
<span class="t" style="left:1031.75px;top:761.60px;font-size:13px;line-height:13px;font-weight:700;color:#111;transform:scaleX(0.9200);">11.5</span>
<span class="t" style="left:1202.31px;top:761.60px;font-size:13px;line-height:13px;font-weight:700;color:#111;transform:scaleX(0.9200);">3.5</span>
<span class="t" style="left:1372.31px;top:761.60px;font-size:13px;line-height:13px;font-weight:700;color:#111;transform:scaleX(0.9200);">3.5</span>
<span class="t" style="left:1542.31px;top:761.60px;font-size:13px;line-height:13px;font-weight:700;color:#111;transform:scaleX(0.9200);">3</span>
<span class="t" style="left:1711.75px;top:761.60px;font-size:13px;line-height:13px;font-weight:700;color:#111;transform:scaleX(0.9200);">10</span>
<span class="t" style="left:11.82px;top:781.60px;font-size:13px;line-height:13px;font-weight:700;color:#111;transform:scaleX(0.9000);">Average</span>
<span class="t" style="left:352.13px;top:781.60px;font-size:13px;line-height:13px;font-weight:700;color:#111;transform:scaleX(0.9200);">9</span>
<span class="t" style="left:522.31px;top:781.60px;font-size:13px;line-height:13px;font-weight:700;color:#111;transform:scaleX(0.9200);">3.11</span>
<span class="t" style="left:692.31px;top:781.60px;font-size:13px;line-height:13px;font-weight:700;color:#111;transform:scaleX(0.9200);">3.33</span>
<span class="t" style="left:862.31px;top:781.60px;font-size:13px;line-height:13px;font-weight:700;color:#111;transform:scaleX(0.9200);">3.56</span>
<span class="t" style="left:1031.75px;top:781.60px;font-size:13px;line-height:13px;font-weight:700;color:#111;transform:scaleX(0.9200);">10</span>
<span class="t" style="left:1202.31px;top:781.60px;font-size:13px;line-height:13px;font-weight:700;color:#111;transform:scaleX(0.9200);">3.44</span>
<span class="t" style="left:1372.31px;top:781.60px;font-size:13px;line-height:13px;font-weight:700;color:#111;transform:scaleX(0.9200);">3.44</span>
<span class="t" style="left:1542.31px;top:781.60px;font-size:13px;line-height:13px;font-weight:700;color:#111;transform:scaleX(0.9200);">3.78</span>
<span class="t" style="left:1711.75px;top:781.60px;font-size:13px;line-height:13px;font-weight:700;color:#111;transform:scaleX(0.9200);">10.67</span>
<div style="position:absolute;left:1px;top:0;width:1828px;height:801px;box-sizing:border-box;border:3px solid #000;border-right-width:3px"></div>
<div style="position:absolute;left:4px;top:3px;width:1822px;height:795px;box-sizing:border-box;border:1px solid #fff"></div>
<div style="position:absolute;left:0;top:801px;width:1830px;height:9px;background:#f8f8f8"></div><div style="position:absolute;left:0;top:801px;width:1830px;height:1px;background:#fff"></div><div style="position:absolute;left:0;top:0;width:1px;height:801px;background:#fff"></div><div style="position:absolute;left:1829px;top:0;width:1px;height:801px;background:#fff"></div>
<div style="position:absolute;left:8px;top:802px;width:402px;height:6px;background:#bdbdbd;border-radius:3px"></div><div style="position:absolute;left:4px;top:801px;width:1px;height:9px;background:#fff"></div><div style="position:absolute;left:5px;top:801px;width:1px;height:9px;background:#dedede"></div>
</body></html>
